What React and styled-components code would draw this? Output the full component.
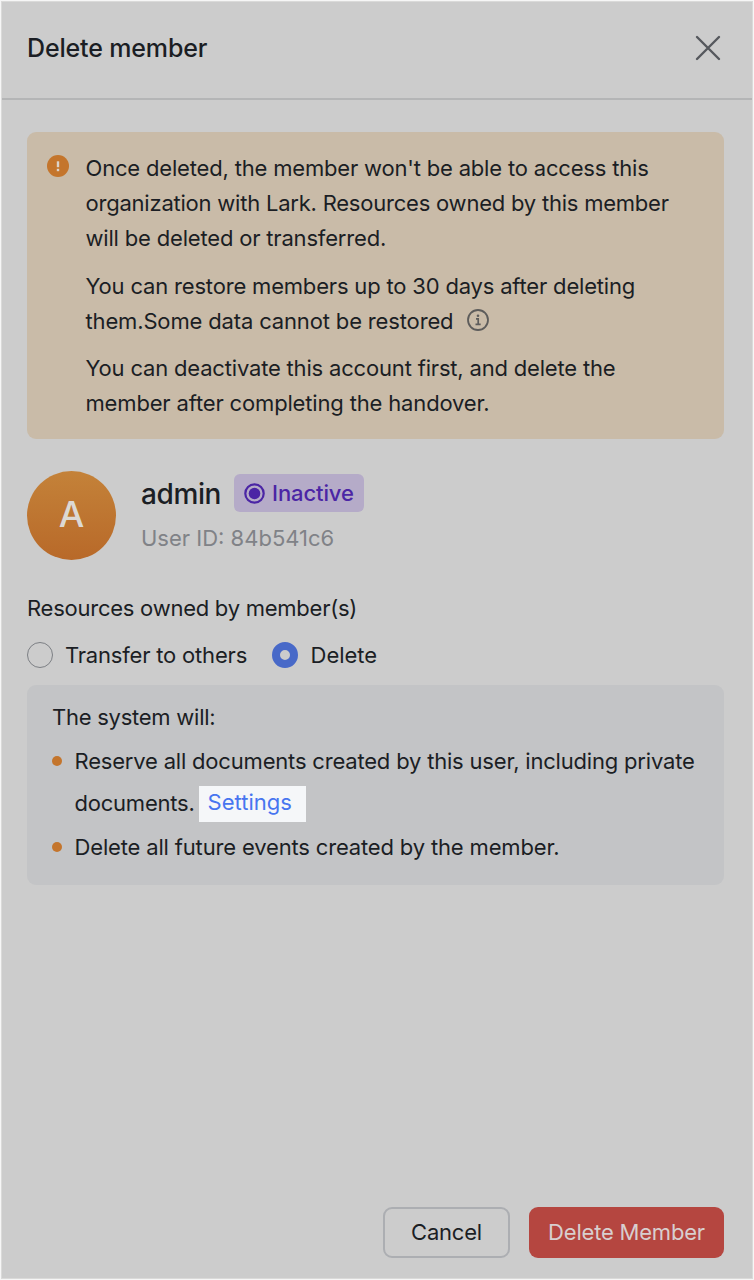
import React from 'react';
import styled, { createGlobalStyle } from 'styled-components';

const GlobalStyle = createGlobalStyle`
  * { box-sizing: border-box; }
  body { margin: 0; background: #f0f0f0; }
  p, h1, h2, ul { margin: 0; padding: 0; font-weight: 400; }
  button { font: inherit; padding: 0; }
`;

const Dialog = styled.main`
  width: 754px;
  height: 1280px;
  display: flex;
  flex-direction: column;
  border: 1px solid #f6f6f6;
  padding: 1px;
  box-shadow: inset 0 0 0 1px #dadad9;
  background: #cccccc;
  color: #1b1e24;
  font-family: Inter, sans-serif;
  font-size: 22px;
  white-space: nowrap;
`;

const Header = styled.header`
  height: 98px;
  flex: none;
  display: flex;
  align-items: center;
  justify-content: space-between;
  padding: 0 31px 5px 25px;
  border-bottom: 2px solid #b4b5b6;
`;

const Title = styled.h1`
  font-size: 25px;
  font-weight: 500;
  line-height: 34px;
  letter-spacing: -0.15px;
`;

const CloseButton = styled.button`
  width: 26px;
  height: 26px;
  border: 0;
  background: none;
  color: #55585d;
  svg { display: block; }
`;

const Body = styled.section`
  flex: 1;
  padding: 32px 28px 0 25px;
`;

const Notice = styled.div`
  height: 307px;
  display: flex;
  gap: 16.5px;
  padding: 19px 20px;
  border-radius: 9px;
  background: #c9bba8;
  > svg { flex: none; margin-top: 4px; }
`;

const NoticeText = styled.div`
  display: flex;
  flex-direction: column;
  gap: 12.5px;
`;

const Line = styled.span`
  display: flex;
  align-items: center;
  line-height: 35px;
  height: 35px;
  letter-spacing: ${(p) => p.$track ?? -0.18}px;
  svg { margin: -2px 0 0 13.5px; }
`;

const Member = styled.div`
  display: flex;
  margin-top: 32px;
  height: 89px;
`;

const Avatar = styled.div`
  width: 89px;
  height: 89px;
  border-radius: 50%;
  display: flex;
  align-items: center;
  justify-content: center;
  padding-bottom: 4px;
  background: linear-gradient(#c48239, #b86929);
  color: #dcd9d4;
  font-size: 36px;
  font-weight: 450;
`;

const MemberInfo = styled.div`
  padding: 3px 0 0 25px;
`;

const NameRow = styled.div`
  display: flex;
  align-items: center;
  gap: 13px;
  height: 38px;
`;

const Name = styled.h2`
  padding-top: 1px;
  font-size: 28px;
  font-weight: 500;
  letter-spacing: -0.4px;
`;

const Status = styled.span`
  width: 130px;
  height: 38px;
  display: flex;
  align-items: center;
  gap: 7px;
  padding-left: 10px;
  border-radius: 6px;
  background: #b5abc8;
  color: #4b25a5;
  font-weight: 500;
  letter-spacing: -0.1px;
`;

const UserId = styled.p`
  margin-top: 9px;
  line-height: 35px;
  color: #808287;
`;

const Label = styled.p`
  margin-top: 30px;
  line-height: 36px;
  letter-spacing: -0.25px;
`;

const RadioGroup = styled.div`
  display: flex;
  margin-top: 11px;
  height: 36px;
`;

const Option = styled.label`
  width: ${(p) => p.$width}px;
  display: flex;
  align-items: center;
  gap: ${(p) => p.$gap}px;
  letter-spacing: ${(p) => p.$track || 0}px;
`;

const Radio = styled.span`
  width: 26px;
  height: 26px;
  flex: none;
  border-radius: 50%;
  border: ${(p) => (p.$checked ? '8px solid #4869c8' : '1.5px solid #7c7f84')};
`;

const Summary = styled.div`
  height: 200px;
  margin-top: 12px;
  padding: 15px 25px;
  border-radius: 9px;
  background: #c3c4c6;
`;

const Effects = styled.ul`
  list-style: none;
  margin-top: 5px;
`;

const Effect = styled.li`
  display: flex;
  gap: 12.5px;
  margin-bottom: 3px;
  &::before {
    content: '';
    flex: none;
    width: 10px;
    height: 10px;
    margin-top: 16px;
    border-radius: 50%;
    background: #c4752c;
  }
`;

const EffectLine = styled.span`
  display: flex;
  align-items: center;
  height: 41.5px;
  letter-spacing: ${(p) => p.$track ?? -0.19}px;
`;

const LinkedLine = styled(EffectLine)`
  padding-top: 1px;
`;

const SettingsLink = styled.a`
  width: 107px;
  height: 36px;
  margin: 3px 0 0 4px;
  padding-left: 9px;
  background: #f5f7f9;
  color: #4775f0;
  line-height: 33px;
  letter-spacing: 0;
`;

const Footer = styled.footer`
  display: flex;
  justify-content: flex-end;
  gap: 19px;
  padding: 0 28px 20px 0;
`;

const Button = styled.button`
  width: ${(p) => p.$width}px;
  height: 51px;
  padding-bottom: 1px;
  border-radius: 9px;
  border: ${(p) => (p.$danger ? '0' : '2px solid #acaeb2')};
  background: ${(p) => (p.$danger ? '#b54640' : 'transparent')};
  color: ${(p) => (p.$danger ? '#d8cfcf' : '#1b1e24')};
  letter-spacing: -0.2px;
`;

const CloseIcon = () => (
  <svg width="26" height="26" viewBox="0 0 26 26" fill="none" stroke="currentColor" strokeWidth="2.4" strokeLinecap="round">
    <path d="M2 2L24 24M24 2L2 24" />
  </svg>
);

const WarningIcon = () => (
  <svg width="22" height="22" viewBox="0 0 22 22">
    <circle cx="11" cy="11" r="11" fill="#c4752c" />
    <path d="M11 6.3V12.2" stroke="#dcd3ca" strokeWidth="2.4" />
    <path d="M11 13.8V16.2" stroke="#dcd3ca" strokeWidth="2.4" />
  </svg>
);

const InfoIcon = () => (
  <svg width="22" height="22" viewBox="0 0 22 22" fill="none" stroke="#5d5c5b" strokeWidth="1.8">
    <circle cx="11" cy="11" r="10" />
    <path d="M9 9.8H11.2V15.2M8.5 15.4H13.7" strokeWidth="1.7" />
    <circle cx="11" cy="6.8" r="1.3" fill="#5d5c5b" stroke="none" />
  </svg>
);

const InactiveIcon = () => (
  <svg width="21" height="21" viewBox="0 0 21 21" fill="none">
    <circle cx="10.5" cy="10.5" r="9.2" stroke="currentColor" strokeWidth="2.2" />
    <circle cx="10.5" cy="10.5" r="5.8" fill="currentColor" />
  </svg>
);

export default function App() {
  return (
    <>
      <GlobalStyle />
      <Dialog>
        <Header>
          <Title>Delete member</Title>
          <CloseButton aria-label="Close"><CloseIcon /></CloseButton>
        </Header>
        <Body>
          <Notice>
            <WarningIcon />
            <NoticeText>
              <p>
                <Line>Once deleted, the member won't be able to access this</Line>
                <Line $track={-0.22}>organization with Lark. Resources owned by this member</Line>
                <Line>will be deleted or transferred.</Line>
              </p>
              <p>
                <Line>You can restore members up to 30 days after deleting</Line>
                <Line $track={-0.15}>them.Some data cannot be restored<InfoIcon /></Line>
              </p>
              <p>
                <Line>You can deactivate this account first, and delete the</Line>
                <Line $track={-0.16}>member after completing the handover.</Line>
              </p>
            </NoticeText>
          </Notice>
          <Member>
            <Avatar>A</Avatar>
            <MemberInfo>
              <NameRow>
                <Name>admin</Name>
                <Status><InactiveIcon />Inactive</Status>
              </NameRow>
              <UserId>User ID: 84b541c6</UserId>
            </MemberInfo>
          </Member>
          <Label>Resources owned by member(s)</Label>
          <RadioGroup>
            <Option $width={245} $gap={12} $track={-0.19}><Radio />Transfer to others</Option>
            <Option $width={120} $gap={12.5}><Radio $checked />Delete</Option>
          </RadioGroup>
          <Summary>
            <Line $track={-0.25}>The system will:</Line>
            <Effects>
              <Effect>
                <div>
                  <EffectLine>Reserve all documents created by this user, including private</EffectLine>
                  <LinkedLine $track={-0.22}>documents.<SettingsLink>Settings</SettingsLink></LinkedLine>
                </div>
              </Effect>
              <Effect><EffectLine $track={-0.16}>Delete all future events created by the member.</EffectLine></Effect>
            </Effects>
          </Summary>
        </Body>
        <Footer>
          <Button $width={127}>Cancel</Button>
          <Button $danger $width={195}>Delete Member</Button>
        </Footer>
      </Dialog>
    </>
  );
}
